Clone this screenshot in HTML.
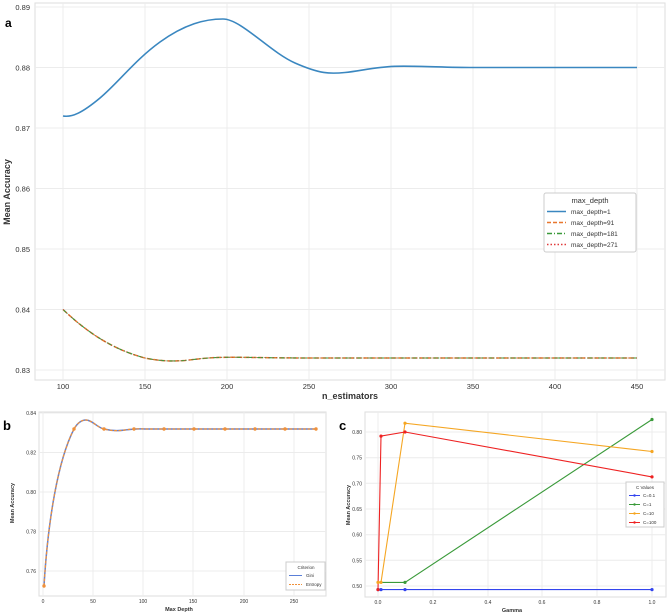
<!DOCTYPE html>
<html><head><meta charset="utf-8"><style>
html,body{margin:0;padding:0;background:#fff;width:668px;height:615px;overflow:hidden}
svg{display:block}
text{font-family:"Liberation Sans",sans-serif;fill:#333}
</style></head><body>
<svg width="668" height="615" viewBox="0 0 668 615" xmlns="http://www.w3.org/2000/svg">
<!-- Panel a -->
<rect x="35" y="3" width="630" height="377" fill="#fff" stroke="#ddd"/>
<g stroke="#ececec" stroke-width="1">
<line x1="63" y1="3" x2="63" y2="380"/><line x1="145" y1="3" x2="145" y2="380"/><line x1="227" y1="3" x2="227" y2="380"/><line x1="309" y1="3" x2="309" y2="380"/><line x1="391" y1="3" x2="391" y2="380"/><line x1="473" y1="3" x2="473" y2="380"/><line x1="555" y1="3" x2="555" y2="380"/><line x1="637" y1="3" x2="637" y2="380"/>
<line x1="35" y1="7" x2="665" y2="7"/><line x1="35" y1="67.5" x2="665" y2="67.5"/><line x1="35" y1="128" x2="665" y2="128"/><line x1="35" y1="188.5" x2="665" y2="188.5"/><line x1="35" y1="249" x2="665" y2="249"/><line x1="35" y1="309.5" x2="665" y2="309.5"/><line x1="35" y1="370" x2="665" y2="370"/>
</g>
<g font-size="7.5" text-anchor="end">
<text x="30" y="10">0.89</text><text x="30" y="70.5">0.88</text><text x="30" y="131">0.87</text><text x="30" y="191.5">0.86</text><text x="30" y="252">0.85</text><text x="30" y="312.5">0.84</text><text x="30" y="373">0.83</text>
</g>
<g font-size="7.5" text-anchor="middle">
<text x="63" y="389">100</text><text x="145" y="389">150</text><text x="227" y="389">200</text><text x="309" y="389">250</text><text x="391" y="389">300</text><text x="473" y="389">350</text><text x="555" y="389">400</text><text x="637" y="389">450</text>
</g>
<text x="350" y="399" font-size="9" font-weight="bold" text-anchor="middle">n_estimators</text>
<text transform="translate(10,192) rotate(-90)" font-size="9" font-weight="bold" text-anchor="middle">Mean Accuracy</text>
<text x="5" y="27" font-size="12" font-weight="bold" style="fill:#000">a</text>
<path d="M63,116 C72,117.5 82,113 100,98 S135,60 160,42 S205,19 223,19 S270,52 295,63 S330,74 345,72.5 S375,67 395,66.3 S445,67.5 473,67.5 L637,67.5" fill="none" stroke="#3a87c0" stroke-width="1.6"/>
<path d="M63,309.5 C90,335 115,350 145,358 C160,361 170,361.5 185,360.5 C205,358 215,357 240,357.3 C260,357.5 280,358 309,358 L637,358" fill="none" stroke="#e8772e" stroke-width="1.5" stroke-dasharray="5,2"/>
<path d="M63,309.5 C90,335 115,350 145,358 C160,361 170,361.5 185,360.5 C205,358 215,357 240,357.3 C260,357.5 280,358 309,358 L637,358" fill="none" stroke="#3a9a3a" stroke-width="1.1" stroke-dasharray="6,2,1,2"/>
<path d="M63,309.5 C90,335 115,350 145,358 C160,361 170,361.5 185,360.5 C205,358 215,357 240,357.3 C260,357.5 280,358 309,358 L637,358" fill="none" stroke="#e03a3a" stroke-width="0.8" stroke-dasharray="1,3"/>
<rect x="544" y="193" width="92" height="59" fill="#fff" stroke="#ccc" rx="2"/>
<text x="590" y="203" font-size="7.5" text-anchor="middle">max_depth</text>
<g font-size="6.5"><text x="571" y="214">max_depth=1</text><text x="571" y="225">max_depth=91</text><text x="571" y="236">max_depth=181</text><text x="571" y="247">max_depth=271</text></g>
<line x1="547" y1="211.5" x2="566" y2="211.5" stroke="#3a87c0" stroke-width="1.5"/>
<line x1="547" y1="222.5" x2="566" y2="222.5" stroke="#e8772e" stroke-width="1.5" stroke-dasharray="4,2"/>
<line x1="547" y1="233.5" x2="566" y2="233.5" stroke="#3a9a3a" stroke-width="1.5" stroke-dasharray="5,2,1,2"/>
<line x1="547" y1="244.5" x2="566" y2="244.5" stroke="#e03a3a" stroke-width="1.5" stroke-dasharray="1.5,2"/>

<!-- Panel b -->
<rect x="39" y="412" width="287" height="184" fill="#fff" stroke="#ddd"/>
<g stroke="#ececec">
<line x1="43" y1="412" x2="43" y2="596"/><line x1="93" y1="412" x2="93" y2="596"/><line x1="143" y1="412" x2="143" y2="596"/><line x1="193" y1="412" x2="193" y2="596"/><line x1="244" y1="412" x2="244" y2="596"/><line x1="294" y1="412" x2="294" y2="596"/>
<line x1="39" y1="413" x2="326" y2="413"/><line x1="39" y1="452.5" x2="326" y2="452.5"/><line x1="39" y1="492" x2="326" y2="492"/><line x1="39" y1="531.5" x2="326" y2="531.5"/><line x1="39" y1="571" x2="326" y2="571"/>
</g>
<g font-size="5" text-anchor="end"><text x="36" y="415">0.84</text><text x="36" y="454.5">0.82</text><text x="36" y="494">0.80</text><text x="36" y="533.5">0.78</text><text x="36" y="573">0.76</text></g>
<g font-size="5" text-anchor="middle"><text x="43" y="603">0</text><text x="93" y="603">50</text><text x="143" y="603">100</text><text x="193" y="603">150</text><text x="244" y="603">200</text><text x="294" y="603">250</text></g>
<text x="179" y="611" font-size="5.5" font-weight="bold" text-anchor="middle">Max Depth</text>
<text transform="translate(14,503) rotate(-90)" font-size="5.5" font-weight="bold" text-anchor="middle">Mean Accuracy</text>
<text x="3" y="430" font-size="13" font-weight="bold" style="fill:#000">b</text>
<path d="M44,586 C48,520 58,460 74,429 C78,422 82,420 86,420 C92,420 98,428 104,429 C112,431 118,431 125,430 C132,429 136,428.5 145,429 L316,429" fill="none" stroke="#5a7fd8" stroke-width="1.5"/>
<path d="M44,586 C48,520 58,460 74,429 C78,422 82,420 86,420 C92,420 98,428 104,429 C112,431 118,431 125,430 C132,429 136,428.5 145,429 L316,429" fill="none" stroke="#f0913a" stroke-width="1.2" stroke-dasharray="3,1.5"/>
<g fill="#f0913a"><circle cx="44" cy="586" r="1.7"/><circle cx="74" cy="429" r="1.7"/><circle cx="104" cy="429" r="1.7"/><circle cx="134" cy="429" r="1.7"/><circle cx="164" cy="429" r="1.7"/><circle cx="194" cy="429" r="1.7"/><circle cx="225" cy="429" r="1.7"/><circle cx="255" cy="429" r="1.7"/><circle cx="285" cy="429" r="1.7"/><circle cx="316" cy="429" r="1.7"/></g>
<rect x="286" y="562" width="39" height="28" fill="#fff" stroke="#ccc"/>
<text x="306" y="569" font-size="4.5" text-anchor="middle">Criterion</text>
<text x="306" y="577" font-size="4.5">Gini</text><text x="306" y="586" font-size="4.5">Entropy</text>
<line x1="289" y1="575.5" x2="302" y2="575.5" stroke="#5a7fd8" stroke-width="1"/>
<line x1="289" y1="584.5" x2="302" y2="584.5" stroke="#f0913a" stroke-width="1" stroke-dasharray="2,1"/>

<!-- Panel c -->
<rect x="365" y="412" width="301" height="185" fill="#fff" stroke="#ddd"/>
<g stroke="#ececec">
<line x1="378" y1="412" x2="378" y2="597"/><line x1="433" y1="412" x2="433" y2="597"/><line x1="488" y1="412" x2="488" y2="597"/><line x1="542" y1="412" x2="542" y2="597"/><line x1="597" y1="412" x2="597" y2="597"/><line x1="652" y1="412" x2="652" y2="597"/>
<line x1="365" y1="432" x2="666" y2="432"/><line x1="365" y1="457.7" x2="666" y2="457.7"/><line x1="365" y1="483.3" x2="666" y2="483.3"/><line x1="365" y1="509" x2="666" y2="509"/><line x1="365" y1="534.7" x2="666" y2="534.7"/><line x1="365" y1="560.3" x2="666" y2="560.3"/><line x1="365" y1="586" x2="666" y2="586"/>
</g>
<g font-size="5" text-anchor="end"><text x="362" y="434">0.80</text><text x="362" y="459.7">0.75</text><text x="362" y="485.3">0.70</text><text x="362" y="511">0.65</text><text x="362" y="536.7">0.60</text><text x="362" y="562.3">0.55</text><text x="362" y="588">0.50</text></g>
<g font-size="5" text-anchor="middle"><text x="378" y="604">0.0</text><text x="433" y="604">0.2</text><text x="488" y="604">0.4</text><text x="542" y="604">0.6</text><text x="597" y="604">0.8</text><text x="652" y="604">1.0</text></g>
<text x="512" y="612" font-size="5.5" font-weight="bold" text-anchor="middle">Gamma</text>
<text transform="translate(350,505) rotate(-90)" font-size="5.5" font-weight="bold" text-anchor="middle">Mean Accuracy</text>
<text x="339" y="430" font-size="13" font-weight="bold" style="fill:#000">c</text>
<g fill="none" stroke-width="1.1">
<polyline points="378,589.6 381,589.6 405,589.6 652,589.6" stroke="#3344ee"/>
<polyline points="378,582.4 381,582.4 405,582.4 652,419.5" stroke="#3a9a3a"/>
<polyline points="378,582.4 381,582.4 405,423.2 652,451.5" stroke="#f5a623"/>
<polyline points="378,589.6 381,436.1 405,432 652,476.9" stroke="#ee2222"/>
</g>
<g fill="#3344ee"><circle cx="378" cy="589.6" r="1.6"/><circle cx="381" cy="589.6" r="1.6"/><circle cx="405" cy="589.6" r="1.6"/><circle cx="652" cy="589.6" r="1.6"/></g>
<g fill="#3a9a3a"><circle cx="405" cy="582.4" r="1.6"/><circle cx="652" cy="419.5" r="1.6"/></g>
<g fill="#f5a623"><circle cx="378" cy="582.4" r="1.6"/><circle cx="381" cy="582.4" r="1.6"/><circle cx="405" cy="423.2" r="1.6"/><circle cx="652" cy="451.5" r="1.6"/></g>
<g fill="#ee2222"><circle cx="378" cy="589.6" r="1.6"/><circle cx="381" cy="436.1" r="1.6"/><circle cx="405" cy="432" r="1.6"/><circle cx="652" cy="476.9" r="1.6"/></g>
<rect x="626" y="482" width="38" height="45" fill="#fff" stroke="#ccc"/>
<text x="645" y="489" font-size="4.5" text-anchor="middle">C Values</text>
<g font-size="4.5"><text x="643" y="497">C=0.1</text><text x="643" y="506">C=1</text><text x="643" y="515">C=10</text><text x="643" y="524">C=100</text></g>
<line x1="629" y1="495.5" x2="640" y2="495.5" stroke="#3344ee"/><circle cx="634.5" cy="495.5" r="1.2" fill="#3344ee"/>
<line x1="629" y1="504.5" x2="640" y2="504.5" stroke="#3a9a3a"/><circle cx="634.5" cy="504.5" r="1.2" fill="#3a9a3a"/>
<line x1="629" y1="513.5" x2="640" y2="513.5" stroke="#f5a623"/><circle cx="634.5" cy="513.5" r="1.2" fill="#f5a623"/>
<line x1="629" y1="522.5" x2="640" y2="522.5" stroke="#ee2222"/><circle cx="634.5" cy="522.5" r="1.2" fill="#ee2222"/>
</svg>
</body></html>
